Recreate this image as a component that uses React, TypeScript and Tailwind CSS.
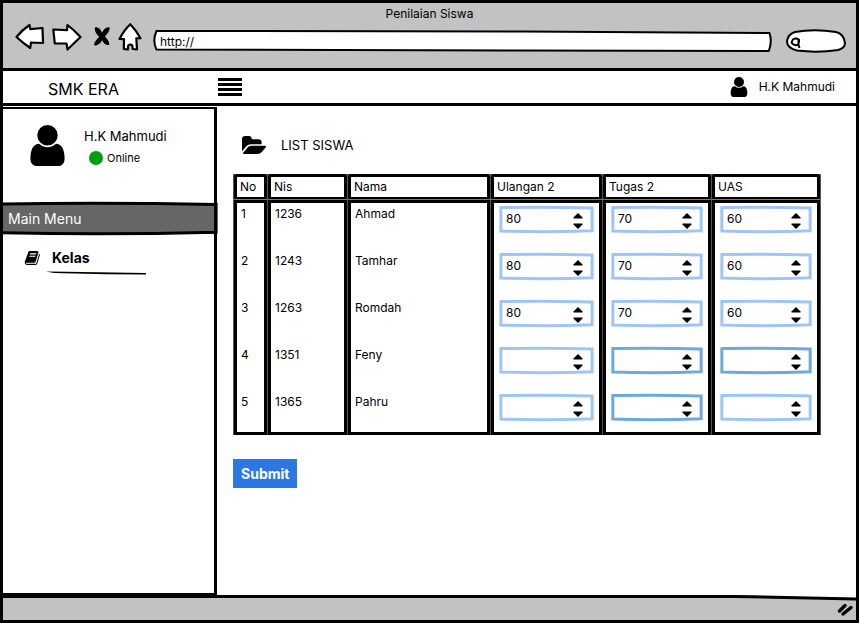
import { useState, type ReactNode } from "react";

type Score = number | "";

type Student = {
  nis: string;
  name: string;
  scores: Score[];
};

const SUBJECTS = ["Ulangan 2", "Tugas 2", "UAS"];

const STUDENTS: Student[] = [
  { nis: "1236", name: "Ahmad", scores: [80, 70, 60] },
  { nis: "1243", name: "Tamhar", scores: [80, 70, 60] },
  { nis: "1263", name: "Romdah", scores: [80, 70, 60] },
  { nis: "1351", name: "Feny", scores: ["", "", ""] },
  { nis: "1365", name: "Pahru", scores: ["", "", ""] },
];

// row-column pairs whose field has the darker outline
const DARK_FIELDS = ["3-1", "3-2", "4-1"];

/* Hand-drawn outline that stretches over its parent */
function SketchOutline({ d, className }: { d: string; className: string }) {
  return (
    <svg
      className={`pointer-events-none absolute inset-0 h-full w-full overflow-visible ${className}`}
      viewBox="0 0 100 100"
      preserveAspectRatio="none"
      fill="none"
      aria-hidden="true"
    >
      <path d={d} vectorEffect="non-scaling-stroke" />
    </svg>
  );
}

function UserIcon({ className }: { className: string }) {
  return (
    <svg className={className} viewBox="0 128 1280 1536" fill="currentColor" aria-hidden="true">
      <path d="M1280 1399q0 109-62.5 187t-150.5 78h-854q-88 0-150.5-78t-62.5-187q0-85 8.5-160.5t31.5-152 58.5-131 94-89 134.5-34.5q131 128 313 128t313-128q76 0 134.5 34.5t94 89 58.5 131 31.5 152 8.5 160.5zm-256-887q0 159-112.5 271.5t-271.5 112.5-271.5-112.5-112.5-271.5 112.5-271.5 271.5-112.5 271.5 112.5 112.5 271.5z" />
    </svg>
  );
}

function BookIcon() {
  return (
    <svg className="h-[14px] w-4" viewBox="0 128 1728 1536" fill="currentColor" aria-hidden="true">
      <path d="M1703 478q40 57 18 129l-275 906q-19 64-76.5 107.5t-122.5 43.5h-923q-77 0-148.5-53.5t-99.5-131.5q-24-67-2-127 0-4 3-27t4-37q1-8-3-21.5t-3-19.5q2-11 8-21t16.5-23.5 16.5-23.5q23-38 45-91.5t30-91.5q3-10 .5-30t-.5-28q3-11 17-28t17-23q21-36 42-92t25-90q1-9-2.5-32t.5-28q4-13 22-30.5t22-22.5q19-26 42.5-84.5t27.5-96.5q1-8-3-25.5t-2-26.5q2-8 9-18t18-23 17-21q8-12 16.5-30.5t15-35 16-36 19.5-32 26.5-23.5 36-11.5 47.5 5.5l-1 3q38-9 51-9h761q74 0 114 56t18 130l-274 906q-36 119-71.5 153.5t-128.5 34.5h-869q-27 0-38 15-11 16-1 43 24 70 144 70h923q29 0 56-15.5t35-41.5l300-987q7-22 5-57 38 15 59 43zm-1064 2q-4 13 2 22.5t20 9.5h608q13 0 25.5-9.5t16.5-22.5l21-64q4-13-2-22.5t-20-9.5h-608q-13 0-25.5 9.5t-16.5 22.5zm-83 256q-4 13 2 22.5t20 9.5h608q13 0 25.5-9.5t16.5-22.5l21-64q4-13-2-22.5t-20-9.5h-608q-13 0-25.5 9.5t-16.5 22.5z" />
    </svg>
  );
}

function FolderIcon() {
  return (
    <svg className="h-[18px] w-6" viewBox="0 128 1879 1408" fill="currentColor" aria-hidden="true">
      <path d="M1879 952q0 31-31 66l-336 396q-43 51-120.5 86.5t-143.5 35.5h-1088q-34 0-60.5-13t-26.5-43q0-31 31-66l336-396q43-51 120.5-86.5t143.5-35.5h1088q34 0 60.5 13t26.5 43zm-343-344v160h-832q-94 0-197 47.5t-164 119.5l-337 396-5 6q0-4-.5-12.5t-.5-12.5v-960q0-92 66-158t158-66h320q92 0 158 66t66 158v32h544q92 0 158 66t66 158z" />
    </svg>
  );
}

function ToolButton({ label, className, children }: { label: string; className: string; children: ReactNode }) {
  return (
    <button type="button" aria-label={label} className={className}>
      {children}
    </button>
  );
}

function BrowserBar() {
  return (
    <header className="border-b-[3px] border-black bg-[#c2c2c2] pt-1 pb-[15px]">
      <h1 className="text-center text-xs leading-[14px]">Penilaian Siswa</h1>
      <div className="flex items-center pr-[10px] pl-3">
        <ToolButton label="Back" className="h-[28px] w-[30px]">
          <svg viewBox="0 0 30 28" fill="#fff" stroke="#000" strokeWidth="2.2" strokeLinejoin="round">
            <path d="M1.500 14Q7 7 14.500 2L15.400 6.200 27.500 5 28 20 16 19.500 15.200 25Q8 20 1.500 14Z" />
          </svg>
        </ToolButton>
        <ToolButton label="Forward" className="ml-[7px] h-[28px] w-[30px]">
          <svg viewBox="0 0 30 28" fill="#fff" stroke="#000" strokeWidth="2.2" strokeLinejoin="round">
            <path d="M1.300 6.500 15 7.200 15.500 2Q22 7 28.500 14L15.500 26.500 14.500 20.500 2.800 20.500Z" />
          </svg>
        </ToolButton>
        <ToolButton label="Stop" className="ml-[11px] h-[28px] w-[18px]">
          <svg viewBox="0 0 18 28" fill="#000">
            <path d="M2 4.500C5 3.200 7.500 6 9 9.500 11 6 14 3 16.600 4.700 17 8 13.500 11.500 11.800 13.500 14 15.500 16.500 19 16.300 21.500 13 23.500 10.500 20 9.200 17.300 7.500 20 4.500 23.300 1.200 22.200.8 19.500 4 16 6.200 13.700 3.500 11.500 1.200 7.500 2 4.500Z" />
          </svg>
        </ToolButton>
        <ToolButton label="Home" className="ml-[7px] h-[28px] w-[24px]">
          <svg viewBox="0 0 24 28" fill="#fff" stroke="#000" strokeWidth="2.2" strokeLinejoin="round">
            <path d="M12.300 1.200Q18 7 22.500 15.200L18.300 15.300 19 26.300 14.700 26 14.300 22.500Q12.500 20.500 10.300 22.500L9.800 26.500 5.800 26 6 16.200 1.500 16Q6 7 12.300 1.200Z" />
          </svg>
        </ToolButton>
        <div className="relative mt-2 ml-3 h-5 flex-1">
          <svg className="absolute inset-0 h-full w-full overflow-visible" viewBox="0 0 100 100" preserveAspectRatio="none" fill="#fff" stroke="#000" strokeWidth="2" aria-hidden="true">
            <path d="M.4 0 60 2 99.900 10Q100.400 50 99.800 100L60 98 .4 92Q-.3 50 .4 0Z" vectorEffect="non-scaling-stroke" />
          </svg>
          <input aria-label="Address" defaultValue="http://" className="relative block h-full w-full bg-transparent px-[6px] text-xs outline-none" />
        </div>
        <div className="relative mt-2 ml-4 h-6 w-[60px]">
          <svg className="absolute inset-0 h-full w-full" viewBox="0 0 60 24" fill="#fff" stroke="#000" strokeWidth="2" aria-hidden="true">
            <path d="M9 3Q28-.5 50 3 58 5 59 14 59 19 52 21 32 24 11 21.500 1 19 1 12.500 2 5 9 3Z" />
            <path d="M7 10.500Q10 8.500 13 10.800 13.500 16 9.500 16.200 3.500 15 7 10.500ZM12.500 11V16L13.500 19" />
          </svg>
          <input type="search" aria-label="Search" className="relative block h-full w-full bg-transparent pr-2 pl-4 text-xs outline-none" />
        </div>
      </div>
    </header>
  );
}

function NavBar() {
  return (
    <nav className="flex h-[35px] items-center border-b-[3px] border-black pr-[21px] pl-[45px]">
      <a href="#" className="w-[170px] pt-1 text-base">
        SMK ERA
      </a>
      <button type="button" aria-label="Toggle menu" className="flex w-6 flex-col gap-[2px]">
        <span className="h-[3px] bg-black" />
        <span className="h-[3px] bg-black" />
        <span className="h-[3px] bg-black" />
        <span className="h-[3px] bg-black" />
      </button>
      <a href="#" className="ml-auto flex items-center gap-[11px] text-xs">
        <UserIcon className="h-5 w-[18px]" />
        H.K Mahmudi
      </a>
    </nav>
  );
}

function Sidebar() {
  return (
    <aside className="mt-px flex w-[214px] shrink-0 flex-col border-t-2 border-r-[3px] border-b-2 border-black">
      <div className="flex h-[94px] items-start pt-4 pl-[27px]">
        <UserIcon className="h-[41px] w-[35px]" />
        <div className="ml-[19px] pt-px">
          <p className="text-[13px] leading-5">H.K Mahmudi</p>
          <p className="mt-[2px] flex items-center gap-1 pl-[5px] text-[11px] leading-5">
            <span className="h-[14px] w-[14px] rounded-full bg-[#009e0f]" />
            Online
          </p>
        </div>
      </div>
      <div className="relative bg-[#666] px-[5px] text-sm leading-[31px] text-white">
        <SketchOutline d="M0 3Q50 -2 101 5L101 94Q50 103 0 96" className="stroke-black stroke-3" />
        Main Menu
      </div>
      <a href="#" className="mt-[14px] ml-[21px] flex items-center gap-3 text-sm leading-5 font-bold">
        <BookIcon />
        Kelas
      </a>
      <svg className="mt-[3px] ml-[43px] h-[4px] w-[100px]" viewBox="0 0 100 4" aria-hidden="true">
        <path d="M0 .5 20 .7 100 2.100V3.600L60 3.200 8 2Z" />
      </svg>
    </aside>
  );
}

function ScoreField({ label, dark, initial }: { label: string; dark: boolean; initial: Score }) {
  const [value, setValue] = useState<Score>(initial);

  return (
    <div className="relative h-[27px]">
      <SketchOutline
        d="M2 6Q50 3 98 7L98 92Q50 98 2 93Z"
        className={dark ? "stroke-[#6fa8dc] stroke-3" : "stroke-[#9fc5f8] stroke-3"}
      />
      <input
        type="number"
        aria-label={label}
        value={value}
        onChange={(e) => setValue(e.target.value === "" ? "" : Number(e.target.value))}
        className="block h-full w-full appearance-none bg-transparent pr-6 pb-[3px] pl-[7px] text-xs outline-none [-moz-appearance:textfield] [&::-webkit-inner-spin-button]:appearance-none"
      />
      <div className="absolute top-[7px] right-[11px] flex flex-col gap-1">
        <button type="button" aria-label="Increase" onClick={() => setValue(Number(value) + 1)}>
          <svg className="h-[6px] w-[10px]" viewBox="0 0 10 6">
            <path d="M5 0 9.500 4.500V5.500H.5V4.500Z" />
          </svg>
        </button>
        <button type="button" aria-label="Decrease" onClick={() => setValue(Number(value) - 1)}>
          <svg className="h-[6px] w-[10px]" viewBox="0 0 10 6">
            <path d="M5 6 9.500 1.500V.5H.5V1.500Z" />
          </svg>
        </button>
      </div>
    </div>
  );
}

function StudentTable() {
  const head = "rounded-[3px] border-[3px] border-black bg-white px-[3px] text-left font-normal leading-5";
  const cell =
    "border-x-[3px] border-black bg-white pt-[3px] align-top group-first:border-t-[3px] group-first:shadow-[0_-1px_0_#777] group-last:border-b-[3px]";
  const text = `${cell} px-1 leading-4`;

  return (
    <table className="w-full table-fixed border-separate border-spacing-x-px border-spacing-y-0 bg-[#555] text-xs">
      <colgroup>
        <col className="w-[33px]" />
        <col className="w-[79px]" />
        <col className="w-[142px]" />
        <col className="w-[111px]" />
        <col className="w-[108px]" />
        <col className="w-[108px]" />
      </colgroup>
      <thead>
        <tr>
          {["No", "Nis", "Nama", ...SUBJECTS].map((title) => (
            <th key={title} scope="col" className={head}>
              {title}
            </th>
          ))}
        </tr>
      </thead>
      <tbody>
        {STUDENTS.map((student, row) => (
          <tr key={student.nis} className="group">
            <td className={text}>{row + 1}</td>
            <td className={text}>{student.nis}</td>
            <td className={text}>{student.name}</td>
            {student.scores.map((score, col) => (
              <td key={SUBJECTS[col]} className={`${cell} px-[5px] pb-[17px] group-last:pb-[11px]`}>
                <ScoreField
                  label={`${SUBJECTS[col]} ${student.name}`}
                  dark={DARK_FIELDS.includes(`${row}-${col}`)}
                  initial={score}
                />
              </td>
            ))}
          </tr>
        ))}
      </tbody>
    </table>
  );
}

function StatusBar() {
  return (
    <footer className="relative flex h-[25px] items-center justify-end bg-[#c2c2c2] pt-[2px]">
      <svg className="absolute inset-x-0 top-0 h-[6px] w-full" viewBox="0 0 100 6" preserveAspectRatio="none" aria-hidden="true">
        <path d="M0 0H86L100 3V0Z" fill="#fff" />
        <path d="M0 0H86L100 2.500V5.500L86 3H0Z" />
      </svg>
      <svg className="h-4 w-[19px]" viewBox="0 0 19 16" stroke="#000" strokeWidth="3.4" strokeLinecap="round" aria-hidden="true">
        <path d="M2.500 10 8 4.500M6 13 14 6.500" />
      </svg>
    </footer>
  );
}

export default function App() {
  return (
    <div className="flex min-h-screen flex-col border-[3px] border-black bg-white font-['Inter',sans-serif] text-black">
      <BrowserBar />
      <NavBar />
      <div className="flex flex-1">
        <Sidebar />
        <main className="min-w-0 flex-1 pt-[29px] pr-[37px] pl-4">
          <h2 className="flex items-center gap-[15px] pl-[9px] text-[13px] leading-5">
            <FolderIcon />
            LIST SISWA
          </h2>
          <form className="mt-[19px]" onSubmit={(e) => e.preventDefault()}>
            <StudentTable />
            <button type="submit" className="mt-6 bg-[#2b78e4] px-2 text-sm leading-[29px] font-bold text-white">
              Submit
            </button>
          </form>
        </main>
      </div>
      <StatusBar />
    </div>
  );
}
